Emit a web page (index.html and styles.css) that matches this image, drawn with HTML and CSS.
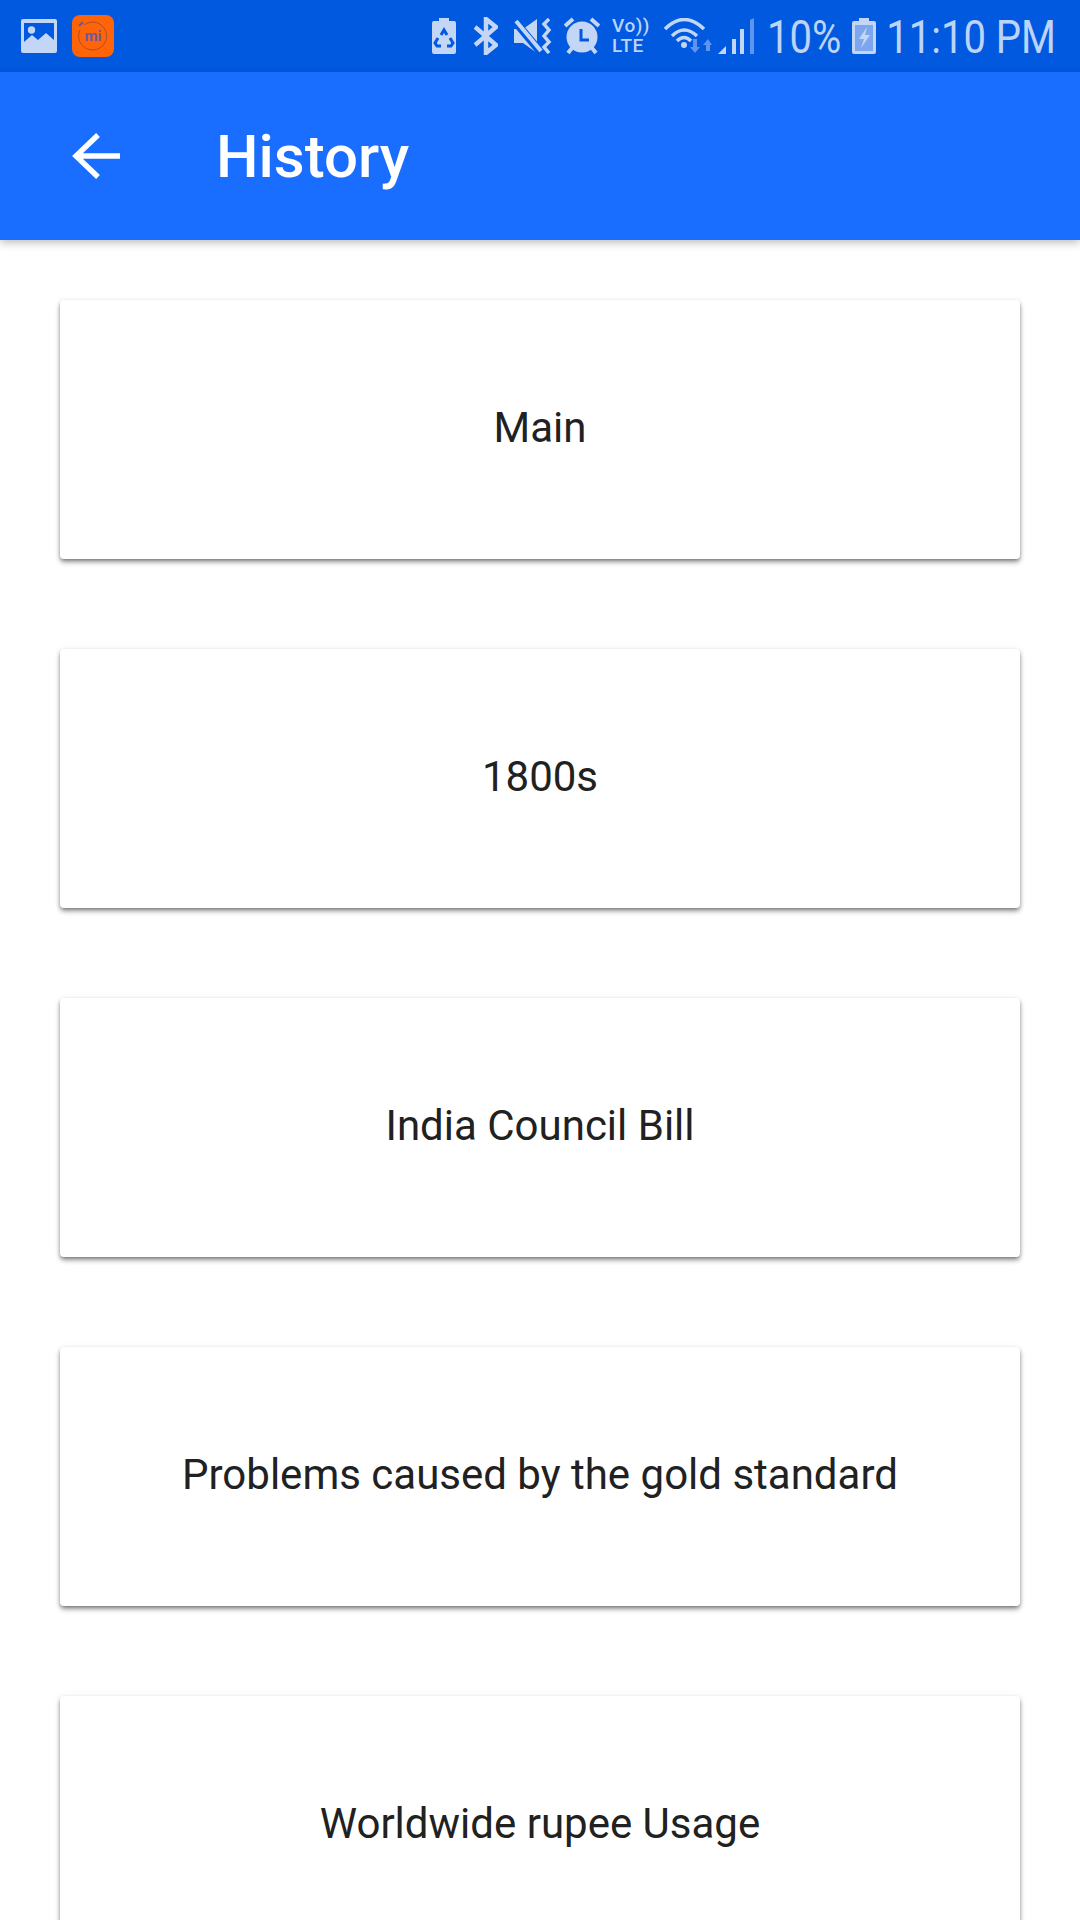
FILE: index.html
```html
<!DOCTYPE html>
<html lang="en">
<head>
    <meta charset="UTF-8">
    <meta name="viewport" content="width=device-width, initial-scale=1.0">
    <title>History</title>
    <link rel="stylesheet" href="styles.css">
</head>
<body>
    <div class="status-bar">
        <div class="status-left">
            <!-- Галерея -->
            <svg class="icon-photo" viewBox="0 0 36 34">
                <path fill="#c3d6f5" fill-rule="evenodd" d="M2 0h32a2 2 0 0 1 2 2v30a2 2 0 0 1-2 2H2a2 2 0 0 1-2-2V2a2 2 0 0 1 2-2zM3 4v19l8-7 6 5 8-7 8 7V4z"/>
                <circle cx="10.500" cy="11" r="3.700" fill="#c3d6f5"/>
            </svg>
            <!-- Mi -->
            <svg class="icon-mi" viewBox="0 0 42 42">
                <rect width="42" height="42" rx="8" fill="#ff6508"/>
                <path d="M12 10a14 14 0 1 1-4 5" fill="none" stroke="#a9502f" stroke-width="1"/>
                <path d="M7 11l4-4" stroke="#6a5aa0" stroke-width="2.400"/>
                <text class="mi-text" x="21" y="26" text-anchor="middle">mi</text>
            </svg>
        </div>
        <div class="status-right">
            <!-- Экономия батареи -->
            <svg class="icon-saver" viewBox="0 0 24 36">
                <path fill="#c3d6f5" d="M7 0h10v3h5a2 2 0 0 1 2 2v29a2 2 0 0 1-2 2H2a2 2 0 0 1-2-2V5a2 2 0 0 1 2-2h5z"/>
                <path fill="none" stroke="#0159e0" stroke-width="3" d="M9 17l3-5 3 5M18 20l3 5-2 3h-4M9 28H5l-2-3 3-5"/>
            </svg>
            <!-- Bluetooth -->
            <svg class="icon-bt" viewBox="0 0 24 38">
                <path fill="none" stroke="#c3d6f5" stroke-width="4.500" d="M1 10l21 18-10 8V2l10 8L1 28"/>
            </svg>
            <!-- Без звука -->
            <svg class="icon-mute" viewBox="0 0 38 36">
                <path fill="#c3d6f5" d="M0 11h9L23 1v34L9 25H0z"/>
                <path stroke="#0159e0" stroke-width="8" d="M-1 1l30 36"/>
                <path stroke="#c3d6f5" stroke-width="4" d="M2 3l25 30"/>
                <path fill="none" stroke="#c3d6f5" stroke-width="3.500" d="M35 1l-5 5 5 6-5 6 5 6-5 5 5 6"/>
            </svg>
            <!-- Будильник -->
            <svg class="icon-alarm" viewBox="0 0 36 38">
                <circle cx="18" cy="20" r="15.500" fill="#c3d6f5"/>
                <path stroke="#c3d6f5" stroke-width="4" d="M1 9l8-7M35 9l-8-7M8 31l-4 5M28 31l4 5"/>
                <path fill="none" stroke="#0159e0" stroke-width="3" d="M17 12v11h8"/>
            </svg>
            <!-- VoLTE -->
            <div class="volte">Vo))<br>LTE</div>
            <!-- Wi-Fi -->
            <svg class="icon-wifi" viewBox="0 0 48 36">
                <path fill="none" stroke="#c3d6f5" stroke-width="3.500" d="M1 11Q20-8 40 11M8 18Q20 6 33 18M13 23Q20 16 27 23"/>
                <circle cx="20" cy="27" r="3" fill="#c3d6f5"/>
                <path fill="#5f93ee" d="M29 21h4v8h3l-5 6-5-6h3zM46 33h-4v-6h-3l5-6 4 6h-2z"/>
            </svg>
            <!-- Сигнал -->
            <svg class="icon-signal" viewBox="0 0 36 37">
                <path fill="#c3d6f5" d="M0 36l8-8v8zM14 21h4v15h-4zM22 11h4v25h-4z"/>
                <path fill="#5f93ee" d="M32 2l4-2v36h-4z"/>
            </svg>
            <span class="battery-text">10%</span>
            <!-- Батарея -->
            <svg class="icon-battery" viewBox="0 0 24 36">
                <path fill="#c3d6f5" d="M7 0h10v3h5a2 2 0 0 1 2 2v29a2 2 0 0 1-2 2H2a2 2 0 0 1-2-2V5a2 2 0 0 1 2-2h5z"/>
                <path fill="#7ea6ee" d="M3 7h18v26H3z"/>
                <path fill="#c3d6f5" d="M15 9l-8 12h5l-3 9 9-13h-5z"/>
            </svg>
            <span class="clock">11:10 PM</span>
        </div>
    </div>

    <div class="app-bar">
        <svg class="back-arrow" viewBox="0 0 48 48">
            <path fill="none" stroke="#fff" stroke-width="5.400" d="M48 24H4M26 3L4 24l22 21"/>
        </svg>
        <h1 class="app-title">History</h1>
    </div>

    <div class="card-list">
        <div class="card">Main</div>
        <div class="card">1800s</div>
        <div class="card">India Council Bill</div>
        <div class="card">Problems caused by the gold standard</div>
        <div class="card">Worldwide rupee Usage</div>
    </div>
</body>
</html>
```

FILE: styles.css
```css
body {
    font-family: Roboto, sans-serif;
    background-color: #ffffff;
    margin: 0;
    height: 1920px;
    overflow: hidden;
}

.status-bar {
    height: 72px;
    background-color: #0159e0;
    color: #bcd4f8;
    display: flex;
    align-items: center;
    justify-content: space-between;
    padding: 0 24px 0 21px;
    box-sizing: border-box;
}

.status-left,
.status-right {
    display: flex;
    align-items: center;
}

.status-left {
    gap: 15px;
}

.icon-photo { width: 36px; height: 34px; }
.icon-mi { width: 42px; height: 42px; }
.icon-saver { width: 24px; height: 36px; margin-right: 18px; }
.icon-bt { width: 24px; height: 38px; margin-right: 16px; }
.icon-mute { width: 38px; height: 36px; margin-right: 12px; }
.icon-alarm { width: 36px; height: 38px; margin-right: 12px; }
.icon-wifi { width: 48px; height: 36px; margin-right: 6px; }
.icon-signal { width: 36px; height: 37px; margin-right: 13px; }
.icon-battery { width: 24px; height: 36px; margin: 0 10px 0 11px; }

.mi-text {
    fill: #6a5aa0;
    font-size: 15px;
    font-weight: 700;
}

.volte {
    width: 36px;
    margin-right: 16px;
    font-size: 19px;
    font-weight: 500;
    line-height: 20px;
    letter-spacing: 0.5px;
    white-space: nowrap;
}

/* цифры в статус-баре выше и уже, чем обычный Roboto */
.battery-text,
.clock {
    font-size: 40px;
    line-height: 72px;
    transform: translateY(2px) scaleY(1.16);
}

.app-bar {
    height: 168px;
    background-color: #1a6eff;
    display: flex;
    align-items: center;
    padding-left: 72px;
    box-shadow: 0 3px 8px rgba(0, 0, 0, 0.25);
    position: relative;
}

.back-arrow {
    width: 48px;
    height: 48px;
    margin-right: 96px;
}

.app-title {
    margin: 0;
    color: #ffffff;
    font-size: 60px;
    font-weight: 500;
}

.card-list {
    display: flex;
    flex-direction: column;
    gap: 90px;
    padding: 60px 60px 0;
}

.card {
    flex: none;
    height: 259px;
    padding-bottom: 4px;
    box-sizing: border-box;
    background-color: #ffffff;
    border-radius: 4px;
    box-shadow: 0 2px 4px -1px rgba(0, 0, 0, 0.5), 0 4px 5px rgba(0, 0, 0, 0.2), 0 1px 10px rgba(0, 0, 0, 0.06);
    display: flex;
    align-items: center;
    justify-content: center;
    color: #212121;
    font-size: 42px;
}
```
